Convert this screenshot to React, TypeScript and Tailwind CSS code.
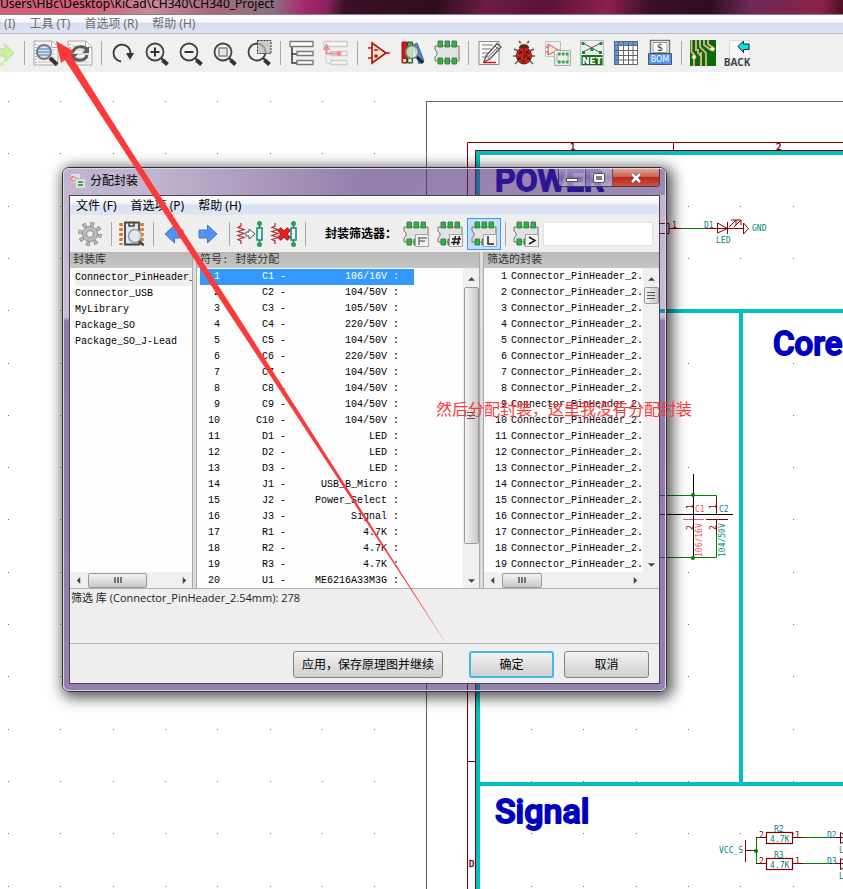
import type { ReactNode } from "react";

const UI = "font-['Noto_Sans','Noto_Sans_CJK_SC',sans-serif]";
const MONO = "font-['Liberation_Mono','Noto_Sans_CJK_SC',monospace]";

/* ---------- data ---------- */

const libraries = ["Connector_PinHeader_", "Connector_USB", "MyLibrary", "Package_SO", "Package_SO_J-Lead"];

const symbols: [string, string][] = [
  ["C1", "106/16V"], ["C2", "104/50V"], ["C3", "105/50V"], ["C4", "220/50V"], ["C5", "104/50V"],
  ["C6", "220/50V"], ["C7", "104/50V"], ["C8", "104/50V"], ["C9", "104/50V"], ["C10", "104/50V"],
  ["D1", "LED"], ["D2", "LED"], ["D3", "LED"], ["J1", "USB_B_Micro"], ["J2", "Power_Select"],
  ["J3", "Signal"], ["R1", "4.7K"], ["R2", "4.7K"], ["R3", "4.7K"], ["U1", "ME6216A33M3G"],
];

const footprints = Array.from({ length: 19 }, () => "Connector_PinHeader_2.");

/* ---------- icons ---------- */

function Svg({ children }: { children: ReactNode }) {
  return (
    <svg viewBox="0 0 26 26" className="h-[26px] w-[26px] overflow-visible" fill="none" aria-hidden="true">
      {children}
    </svg>
  );
}

const Sheet = () => (
  <>
    <path d="M1 1h18l6 6v18H1z" fill="#f4f4f4" stroke="#aaa" />
    <path d="M18.500 1v6.500h6.500" fill="#fff" stroke="#aaa" />
    <path d="M5 6h12M5 10h17M5 14h17M5 18h17M5 22h17" stroke="#c4c4c4" />
    <path d="M3 4v20" stroke="#777" strokeDasharray="1 2" />
  </>
);

const Lens = ({ children }: { children?: ReactNode }) => (
  <Svg>
    <circle cx="11" cy="12" r="8.500" stroke="#444" strokeWidth="1.800" />
    {children}
    <path d="M17 18l2 2" stroke="#333" strokeWidth="2" />
    <path d="M18.500 20l5 4.500" stroke="#333" strokeWidth="4" />
  </Svg>
);

const Chip = ({ children }: { children?: ReactNode }) => (
  <Svg>
    <path d="M1 6h24v15H1v-4l2-2v-3l-2-2z" fill="#e2e2e2" stroke="#777" />
    <path d="M4 1h4.500v6H4zM11 1h4.500v6H11zM18 1h4.500v6H18zM4 18h4.500v6H4zM11 18h4.500v6H11zM18 18h4.500v6H18z" fill="#19c12c" stroke="#55705a" />
    {children}
  </Svg>
);

const ChipTag = ({ d, tone = "#222" }: { d: string; tone?: string }) => (
  <Chip>
    <rect x="12.500" y="13.500" width="13" height="12" fill="#f2f2f2" stroke="#a5a5a5" />
    <path d={d} stroke={tone} strokeWidth="1.500" />
  </Chip>
);

const GreenArrow = () => (
  <Svg>
    <path d="M3 9h12V4l9 9-9 9v-6H3z" fill="#c9f2a4" stroke="#b3dc92" />
    <path d="M12 22v4" stroke="#c9f2a4" strokeWidth="4" />
  </Svg>
);

const FindIcon = () => (
  <Svg>
    <Sheet />
    <circle cx="11" cy="12" r="7" fill="#d5e2f6" fillOpacity=".85" stroke="#777" strokeWidth="2" />
    <path d="M6 9h10M5 12h12M6 15h10" stroke="#7597cf" strokeWidth="1.500" />
    <path d="M17 18l7 6.500" stroke="#333" strokeWidth="4" />
  </Svg>
);

const ReplaceIcon = () => (
  <Svg>
    <Sheet />
    <path d="M6 12c1-6 11-7 14-2M20 15c-1 6-11 7-14 2" stroke="#5c5c5c" strokeWidth="3" />
    <path d="M22 6v7h-7zM4 21v-7h7z" fill="#5c5c5c" />
  </Svg>
);

const RedrawIcon = () => (
  <Svg>
    <path d="M11 21.500A8.500 8.500 0 1 1 20.500 13" stroke="#333" strokeWidth="1.800" />
    <path d="M16 13h8l-4 7z" fill="#333" />
  </Svg>
);

const TreeIcon = () => (
  <Svg>
    <path d="M3 7v16h5M3 14h5" stroke="#333" strokeWidth="1.500" />
    <path d="M1 1.500h23v5H1zM8 11.500h16v4H8zM8 20.500h16v4H8z" fill="#fff" stroke="#777" strokeWidth="1.300" />
  </Svg>
);

const LeaveIcon = () => (
  <Svg>
    <path d="M3 7v16h5" stroke="#ccc" />
    <path d="M1 1.500h23v5H1zM8 11.500h16v4H8zM8 20.500h16v4H8z" fill="#f8f8f8" stroke="#ccc" strokeWidth="1.300" />
    <path d="M3.500 9v4.500h12" stroke="#f08f8f" strokeWidth="2" />
    <path d="M0 10l3.500-7L7 10z" fill="#f08f8f" />
    <circle cx="16" cy="13.500" r="2.500" fill="#f08f8f" />
  </Svg>
);

const OpampIcon = () => (
  <Svg>
    <path d="M6 3l14 10L6 23z" fill="#f6e6cc" stroke="#b01c14" strokeWidth="1.700" />
    <path d="M2 8h4M2 18h4M20 13h4M8 10h4M8 16h4M10 14v4" stroke="#b01c14" strokeWidth="1.400" />
  </Svg>
);

const LibraryIcon = () => (
  <Svg>
    <path d="M2 2h5v21H2z" fill="#d81111" stroke="#921" />
    <path d="M7.500 2h5v21h-5z" fill="#42aa3a" stroke="#185b16" />
    <path d="M13 5l4-2 7 18-5 3z" fill="#4d86df" stroke="#3266a8" />
    <path d="M3 19h3v3H3zM8.500 19h3v3h-3z" fill="#eee" />
    <circle cx="12" cy="12" r="6.500" fill="#d9edda" fillOpacity=".8" stroke="#777" strokeWidth="1.500" />
    <path d="M17 17l6 6" stroke="#222" strokeWidth="3" />
  </Svg>
);

const EditSheetIcon = () => (
  <Svg>
    <path d="M2 1.500h20v23H2z" fill="#fafafa" stroke="#888" />
    <path d="M5 5h11M5 9h9M5 13h7M5 17h3" stroke="#777" />
    <path d="M20 3.500l4 3.500-11 12-6 3 2-6z" fill="#eee" stroke="#555" strokeWidth="1.300" />
    <path d="M9 16l4 3M18 6l4 3.500M11.500 17L21 7" stroke="#666" />
    <path d="M6 22.500h13" stroke="#f00" strokeWidth="1.500" />
  </Svg>
);

const BugIcon = () => (
  <Svg>
    <path d="M8 1l3 4M18 1l-3 4M3 9l4 2M23 9l-4 2M2 16h4M24 16h-4M4 24l4-4M22 24l-4-4" stroke="#555" strokeWidth="1.400" />
    <path d="M8 8c0-5 10-5 10 0z" fill="#333" />
    <path d="M9 4h2M15 4h2" stroke="#f0d040" strokeWidth="2" />
    <ellipse cx="13" cy="15.500" rx="7.500" ry="8.500" fill="#d3221d" stroke="#7d1512" />
    <path d="M13 7v17" stroke="#6b100e" />
    <path d="M8 11h3v3H8zM15 11h3v3h-3zM7 17h3v3H7zM16 17h3v3h-3zM11 20h1v2h-1zM14 15h2v2h-2z" fill="#421" />
  </Svg>
);

const AssignIcon = () => (
  <Svg>
    <path d="M.500 1.500h15v15H.500z" fill="#f0f0f0" stroke="#c0c0c0" />
    <path d="M3 4l10 6-10 5zM1 7h3M1 12h3M13 10h3" fill="#f6e6cc" stroke="#cf5a50" />
    <path d="M9.500 10.500h16v15h-16z" fill="#eee" stroke="#aaa" />
    <path d="M12 14h11v8H12z" stroke="#aaa" />
    <path d="M13 12.500h2.500v3H13zM17 12.500h2.500v3H17zM21 12.500h2.500v3H21zM13 20.500h2.500v3H13zM17 20.500h2.500v3H17zM21 20.500h2.500v3H21z" fill="#3aa845" />
  </Svg>
);

const NetIcon = () => (
  <Svg>
    <path d="M1.500.500h23v25h-23z" fill="#eee" stroke="#bbb" />
    <path d="M4 3l18 10M22 3L4 12" stroke="#555" />
    <path d="M2.500 2h3v3h-3zM20.500 2h3v3h-3zM11.500 8h3v3h-3zM3 11h3v3H3zM20 11h3v3h-3z" fill="#1b8a2b" />
    <path d="M2.500 15h21v10h-21z" fill="#16701c" />
    <text x="13" y="24" textAnchor="middle" className="fill-white font-['DejaVu_Sans',sans-serif] text-[9px] font-bold">NET</text>
  </Svg>
);

const GridIcon = () => (
  <Svg>
    <path d="M1.500 1.500h23v23h-23z" fill="#fff" />
    <path d="M1 1h24v4H1zM1 1h4v24H1z" fill="#5596f5" />
    <path d="M1.500 1.500h23v23h-23zM5.500 1v24M10.500 1v24M15.500 1v24M20 1v24M1 5.500h24M1 10.500h24M1 15.500h24M1 20h24" stroke="#666" />
  </Svg>
);

const BomIcon = () => (
  <Svg>
    <path d="M3.500.500h19v13h-19z" fill="#fff" stroke="#777" strokeWidth="1.500" />
    <path d="M6 2.500h14v10H6z" stroke="#999" />
    <text x="13" y="11" textAnchor="middle" className="fill-[#444] font-['DejaVu_Sans',sans-serif] text-[10px]">$</text>
    <path d="M1.500 13.500h23v11h-23z" fill="#4e92f3" stroke="#555" />
    <text x="13" y="22" textAnchor="middle" className="fill-white font-['DejaVu_Sans',sans-serif] text-[8px]">BOM</text>
  </Svg>
);

const PcbIcon = () => (
  <Svg>
    <path d="M0 0h26v26H0z" fill="#0b6b0b" />
    <path d="M1.500 0v12l3 3M6 0v11M10 0v7l6 6v13M14 0v5l7 5M4 18v8M11 12v14M8 9v4l3 3M18 0v4l5 4" stroke="#dcb88c" strokeWidth="1.800" />
    <circle cx="4" cy="17" r="2" fill="#fff" stroke="#dcb88c" />
    <circle cx="22.500" cy="9" r="2" fill="#fff" stroke="#dcb88c" />
  </Svg>
);

const BackIcon = () => (
  <Svg>
    <path d="M5.500.500h20v18h-20z" fill="#f8f8f8" stroke="#ddd" />
    <path d="M14 6.500L19.500 1v3H25v5.500h-5.500v3z" fill="#00e4e8" stroke="#222" />
    <text x="13" y="26" textAnchor="middle" className="fill-[#444] font-['Open_Sans',sans-serif] text-[10px] font-bold">BACK</text>
  </Svg>
);

const GearIcon = () => (
  <Svg>
    <circle cx="13" cy="13" r="10" stroke="#8a8a8a" strokeWidth="4" strokeDasharray="3.900 3.950" />
    <circle cx="13" cy="13" r="10" stroke="#bdbdbd" strokeWidth="2.500" strokeDasharray="2.500 5.350" strokeDashoffset="-.7" />
    <circle cx="13" cy="13" r="7.500" fill="#bdbdbd" stroke="#8f8f8f" />
    <circle cx="13" cy="13" r="3.500" fill="#f0f0f0" stroke="#8a8a8a" />
  </Svg>
);

const ChipFindIcon = () => (
  <Svg>
    <path d="M2 2v22M23 2v22" stroke="#e07522" strokeWidth="3.500" strokeDasharray="3 2" />
    <path d="M6 1.500h14v22H6z" fill="#e8e8e8" stroke="#444" strokeWidth="1.800" />
    <path d="M10 1v4h5V1" stroke="#444" strokeWidth="1.500" />
    <circle cx="16" cy="15" r="6.500" fill="#e0e9f5" fillOpacity=".9" stroke="#999" strokeWidth="1.500" />
    <path d="M20.500 20l4 4.500" stroke="#444" strokeWidth="2.500" />
  </Svg>
);

const LeftIcon = () => (
  <Svg>
    <path d="M4 13l9.500-9v5H22v8h-8.500v5z" fill="#4f94f5" stroke="#4a78b9" />
  </Svg>
);

const RightIcon = () => (
  <Svg>
    <path d="M22 13l-9.500-9v5H4v8h8.500v5z" fill="#4f94f5" stroke="#4a78b9" />
  </Svg>
);

const Link = ({ children }: { children: ReactNode }) => (
  <Svg>
    <path d="M4 2v3L1 6.500l6 2-6 2 6 2-6 2 6 2-6 2 3 1.500v3" stroke="#b03434" strokeWidth="1.300" />
    <path d="M22.500 1v24" stroke="#187d3c" strokeWidth="1.500" />
    <path d="M20 7h5v12h-5z" fill="#eef5f5" stroke="#108484" strokeWidth="1.500" />
    <circle cx="22.500" cy="2.500" r="2.500" fill="#26a14d" />
    <circle cx="22.500" cy="23.500" r="2.500" fill="#26a14d" />
    {children}
  </Svg>
);

/* ---------- shared controls ---------- */

function ToolButton({ label, active, children }: { label: string; active?: boolean; children: ReactNode }) {
  return (
    <button
      aria-label={label}
      className={`flex h-8 w-[34px] shrink-0 items-center justify-center ${active ? "border border-[#3c9be8] bg-[#bfe0fa]" : ""}`}
    >
      {children}
    </button>
  );
}

const Sep = ({ tight }: { tight?: boolean }) => (
  <div className={`flex shrink-0 justify-center ${tight ? "w-2" : "w-[9px]"}`}>
    <div className="h-6 w-px bg-[#a8a8a8]" />
  </div>
);

function Tri({ dir }: { dir: "up" | "down" | "left" | "right" }) {
  const d = { up: "M0 5.500L4 1.500L8 5.500z", down: "M0 2.500L4 6.500L8 2.500z", left: "M6 0L2 4L6 8z", right: "M2 0L6 4L2 8z" }[dir];
  return (
    <button aria-label={dir} className="flex h-4 w-4 shrink-0 items-center justify-center">
      <svg viewBox="0 0 8 8" className="h-[7px] w-[7px]" aria-hidden="true"><path d={d} fill="#444" /></svg>
    </button>
  );
}

function HScroll({ thumb }: { thumb: string }) {
  return (
    <div className="flex h-4 items-center bg-[#f0f0f0]">
      <Tri dir="left" />
      <div className="flex flex-1 px-0.5">
        <div className={`${thumb} flex h-[15px] items-center justify-center gap-px rounded-[2px] border border-[#999] bg-linear-to-b from-[#f4f4f4] to-[#c9c9c9]`}>
          <i className="h-1.5 w-0.5 bg-[#777]" /><i className="h-1.5 w-0.5 bg-[#777]" /><i className="h-1.5 w-0.5 bg-[#777]" />
        </div>
      </div>
      <Tri dir="right" />
    </div>
  );
}

function VScroll({ thumb }: { thumb: string }) {
  return (
    <div className="flex w-4 shrink-0 flex-col items-center bg-[#f0f0f0]">
      <div className="pt-[3px]"><Tri dir="up" /></div>
      <div className="flex w-full flex-1 flex-col items-center">
        <div className={`${thumb} flex w-[15px] flex-col items-center justify-center gap-0.5 rounded-[2px] border border-[#999] bg-linear-to-r from-[#f4f4f4] to-[#c9c9c9]`}>
          <i className="h-px w-2 bg-[#555]" /><i className="h-px w-2 bg-[#555]" /><i className="h-px w-2 bg-[#555]" />
        </div>
      </div>
      <Tri dir="down" />
    </div>
  );
}

const PaneHeader = ({ children }: { children: ReactNode }) => (
  <h2 className={`h-4 shrink-0 bg-linear-to-b from-[#b9b9b9] to-[#c6c6c6] px-[3px] text-[11px] leading-4 text-[#333] ${MONO}`}>{children}</h2>
);

const Splitter = () => <div className="w-[5px] shrink-0 border-x border-[#a9a9a9] bg-[#dcdcdc]" />;

/* ---------- schematic ---------- */

function Resistor({ y, name, led }: { y: number; name: string; led: string }) {
  return (
    <g>
      <path d={`M756 ${y}h10M793 ${y}h10M829 ${y}h14`} className="stroke-[#840000]" />
      <path d={`M803 ${y}h26`} className="stroke-[#008400]" />
      <rect x="766.500" y={y - 5} width="26" height="11" className="stroke-[#840000]" strokeWidth="1.200" />
      <path d={`M840.500 ${y - 5}v11l10 -5.500l-10 -5.500`} className="stroke-[#840000]" />
      <g className="fill-[#008484] stroke-none">
        <text x="774" y={y - 6}>{name}</text>
        <text x="770" y={y + 4}>4.7K</text>
        <text x="827" y={y}>{led}</text>
        <text x="839" y={y + 15}>LED</text>
      </g>
      <g className="fill-[#840000] stroke-none">
        <text x="759" y={y}>2</text>
        <text x="795" y={y}>1</text>
      </g>
    </g>
  );
}

function Schematic() {
  const steps = Array.from({ length: 40 }, (_, i) => i);
  return (
    <svg className="absolute inset-0 h-full w-full font-['DejaVu_Sans_Mono',monospace] text-[8px]" fill="none" role="img" aria-label="schematic sheet">
      <g transform="translate(0 -72)">
        {steps.map((r) => steps.map((c) => (
          <rect key={`${r}-${c}`} x={Math.round(8 + c * 52.3)} y={Math.round(101 + r * 52.3)} width="1" height="1" className="fill-[#707070]" />
        )))}
        <path d="M426.500 1600V101.500H2400" className="stroke-[#666]" />
        <path d="M467.500 1600V142.500H2400M475.500 1600V150.500H2400M673.500 142v8M467 761.500h8" className="stroke-[#840000]" />
        <path d="M478 1600V153H2400M480 311H2400M741 311V784M480 784H2400" className="stroke-[#00c0c0]" strokeWidth="4" />
        <g className="fill-[#840000] stroke-[#840000] text-[9px]" strokeWidth=".4">
          <text x="570" y="150">1</text>
          <text x="776" y="150">2</text>
          <text x="469" y="867">D</text>
        </g>
        <g className="fill-[#0000c0] stroke-[#0000c0] font-['Roboto',sans-serif] font-medium" strokeWidth="1.800" strokeLinejoin="round">
          <text x="495" y="191" className="text-[32px]">POWER</text>
          <text x="773" y="355" className="text-[33px]">Core</text>
          <text x="495" y="823" className="text-[34px]">Signal</text>
        </g>

        <path d="M645 223.500h24v10h-24M669 228.500h12M703 228.500h40" className="stroke-[#840000]" />
        <path d="M681 228.500h25" className="stroke-[#008400]" />
        <path d="M717.500 223v10l10-4.500zM727.500 222v12M743.500 223v11l5-5.500zM729 227l7-7m-5 0h5v5M734 227l7-7m-5 0h5v5" className="stroke-[#840000]" />
        <text x="672" y="228" className="fill-[#840000]">1</text>
        <g className="fill-[#008484]">
          <text x="704" y="228">D1</text>
          <text x="716" y="243">LED</text>
          <text x="752" y="231">GND</text>
        </g>

        <path d="M640 495.500h76.500v4M640 557.500h76.500V533" className="stroke-[#008400]" />
        <path d="M716.500 498v16M716.500 520v14M706 519.500h22" className="stroke-[#840000]" />
        <path d="M683 519.500h21" className="stroke-[#f55]" />
        <path d="M640 514.500h93M693.500 474v84" className="stroke-black" />
        <circle cx="693" cy="495" r="2" className="fill-[#008400]" />
        <circle cx="693" cy="558" r="2" className="fill-[#008400]" />
        <text x="695" y="512" className="fill-[#ff4a4a]">C1</text>
        <text x="719" y="512" className="fill-[#008484]">C2</text>
        <text transform="translate(702 557) rotate(-90)" className="fill-[#ff4a4a]">106/16V</text>
        <text transform="translate(725 557) rotate(-90)" className="fill-[#008484]">104/50V</text>
        <g className="fill-[#840000]">
          <text transform="translate(693 509) rotate(-90)">1</text>
          <text transform="translate(716 509) rotate(-90)">1</text>
          <text transform="translate(693 530) rotate(-90)">2</text>
          <text transform="translate(716 530) rotate(-90)">2</text>
        </g>

        <text x="719" y="853" className="fill-[#008484]">VCC_S</text>
        <path d="M745.500 840v22M745 850.500h11" className="stroke-[#840000]" />
        <path d="M756.500 837v26" className="stroke-[#008400]" />
        <circle cx="756" cy="851" r="2" className="fill-[#008400]" />
        <Resistor y={837.5} name="R2" led="D2" />
        <Resistor y={863.5} name="R3" led="D3" />
      </g>
    </svg>
  );
}

/* ---------- dialog ---------- */

function AssignDialog() {
  return (
    <section
      aria-label="分配封装"
      className="absolute top-[167px] left-[62px] flex h-[525px] w-[605px] flex-col overflow-hidden rounded-[7px] border border-[#33303a] shadow-[3px_3px_14px_3px_rgba(0,0,0,0.65)]"
    >
      <div className="relative flex min-h-0 flex-1 flex-col rounded-[6px] border border-[#ddd3e6] bg-[linear-gradient(180deg,rgba(76,38,115,.35)_0,rgba(76,38,115,.3)_148px,rgba(76,38,115,.62)_152px,rgba(76,38,115,.58)_100%)] px-[5px] pb-[6px]">
        <header className="-mx-[5px] flex h-[26px] shrink-0 items-start bg-[linear-gradient(100deg,rgba(76,38,115,0)_15%,rgba(76,38,115,.38)_50%,rgba(76,38,115,.3)_100%)] pl-1.5">
          <svg viewBox="0 0 16 16" className="mt-1 mr-1 h-4 w-4" fill="none" aria-hidden="true">
            <path d="M1 1h9v9H1z" fill="#e6dce6" />
            <path d="M2 3l6 3-6 3zM0 6h2M8 6h3" stroke="#d66a66" />
            <path d="M6 6h9v9H6z" fill="#e8ece8" stroke="#c5c5c5" />
            <path d="M8 9h5M8 12h5" stroke="#41a453" strokeWidth="2" />
          </svg>
          <h1 className={`mt-0.5 text-[12px] leading-5 text-black ${UI}`}>分配封装</h1>
          <div className="mr-[5px] ml-auto flex h-[18px] overflow-hidden rounded-b-[4px] border border-t-0 border-[#463a55]">
            <button aria-label="minimize" className="flex w-[27px] items-end justify-center border-r border-[#5d4d70] bg-linear-to-b from-[#ccbedb]/70 via-[#a08db5]/70 to-[#c3b5d3]/70 pb-1">
              <span className="h-[4px] w-3 border border-[#555] bg-white" />
            </button>
            <button aria-label="maximize" className="flex w-[27px] items-center justify-center border-r border-[#5d4d70] bg-linear-to-b from-[#ccbedb]/70 via-[#a08db5]/70 to-[#c3b5d3]/70">
              <span className="h-2 w-2.5 rounded-[1px] border-2 border-white bg-[#887a99] outline outline-[#555]" />
            </button>
            <button aria-label="close" className="flex w-[46px] items-center justify-center bg-[linear-gradient(180deg,#e0a093_0%,#cf6151_45%,#b52b1b_50%,#cd5040_100%)]">
              <svg viewBox="0 0 12 10" className="h-2.5 w-3" aria-hidden="true">
                <path d="M2 1l8 8M10 1L2 9" stroke="#4c4c55" strokeWidth="4" />
                <path d="M2 1l8 8M10 1L2 9" stroke="#fff" strokeWidth="2.500" />
              </svg>
            </button>
          </div>
        </header>

        <div className={`flex min-h-0 flex-1 flex-col border border-[#4b4257] ${UI}`}>
          <nav className="flex h-[19px] shrink-0 items-center gap-[14px] bg-[linear-gradient(180deg,#fff_0,#f0f4fa_40%,#dae1f1_50%,#e0e6f4_100%)] px-1.5 text-[12px] text-black">
            <button>文件 (F)</button>
            <button>首选项 (P)</button>
            <button>帮助 (H)</button>
          </nav>

          <div className="flex h-[37px] shrink-0 items-center bg-[#f0f0f0]/99 pl-[3px]">
            <ToolButton label="库管理"><GearIcon /></ToolButton>
            <Sep tight />
            <ToolButton label="查看封装"><ChipFindIcon /></ToolButton>
            <Sep tight />
            <ToolButton label="上一个"><LeftIcon /></ToolButton>
            <ToolButton label="下一个"><RightIcon /></ToolButton>
            <Sep tight />
            <ToolButton label="自动关联">
              <Link><path d="M9 11h3V8l6 5-6 5v-3H9z" fill="#fff" stroke="#555" /></Link>
            </ToolButton>
            <ToolButton label="删除关联">
              <Link><path d="M8 8l10 10M18 8L8 18" stroke="#8c1010" strokeWidth="5" /><path d="M8 8l10 10M18 8L8 18" stroke="#e82020" strokeWidth="3.500" /></Link>
            </ToolButton>
            <Sep tight />
            <label htmlFor="filter" className="ml-4 w-[74px] shrink-0 text-[12px] font-bold whitespace-nowrap text-black">封装筛选器：</label>
            <ToolButton label="关键字"><ChipTag d="M16 17h8M16 20h6M16 16v8" tone="#777" /></ToolButton>
            <ToolButton label="引脚数"><ChipTag d="M18.500 15l-2 9M22.500 15l-2 9M15 18h9M14 21.500h9" /></ToolButton>
            <ToolButton label="库" active><ChipTag d="M17 15v8h6" /></ToolButton>
            <Sep tight />
            <ToolButton label="文本"><ChipTag d="M16 16l6 3.500-6 3.500" /></ToolButton>
            <input id="filter" className="mr-[6px] h-6 min-w-0 flex-1 border border-[#e2e2e2] bg-white px-1 text-[12px] outline-none" />
          </div>

          <div className={`flex h-[337px] shrink-0 border-b border-[#b0b0b0] text-[10px] text-black ${MONO}`}>
            <div className="flex w-[122px] shrink-0 flex-col">
              <PaneHeader>封装库</PaneHeader>
              <ul className="flex-1 overflow-hidden bg-white/99 pt-0.5 pl-[5px]">
                {libraries.map((l, i) => (
                  <li key={l} className={`h-4 leading-4 whitespace-nowrap ${i === 0 ? "bg-[#f0f0f0]" : ""}`}>{l}</li>
                ))}
              </ul>
              <HScroll thumb="w-[59px]" />
            </div>
            <Splitter />
            <div className="flex w-[282px] shrink-0 flex-col">
              <PaneHeader>符号: 封装分配</PaneHeader>
              <div className="flex min-h-0 flex-1">
                <ul className="flex flex-1 flex-col bg-white/99 pt-px pl-[3px]">
                  {symbols.map(([ref, value], i) => (
                    <li key={ref} className={`flex min-h-0 w-[214px] flex-1 items-center whitespace-nowrap ${i === 0 ? "bg-[#3399ff] text-white" : ""}`}>
                      <span className="w-5 text-right">{i + 1}</span>
                      <span className="w-[54px] text-right">{ref}</span>
                      <span className="w-3 text-right">-</span>
                      <span className="w-[101px] text-right">{value}</span>
                      <span className="w-3 text-right">:</span>
                    </li>
                  ))}
                </ul>
                <VScroll thumb="h-[257px]" />
              </div>
            </div>
            <Splitter />
            <div className="flex min-w-0 flex-1 flex-col">
              <PaneHeader>筛选的封装</PaneHeader>
              <div className="flex min-h-0 flex-1">
                <ol className="flex min-w-0 flex-1 flex-col bg-white/99 pt-px">
                  {footprints.map((f, i) => (
                    <li key={i} className="flex min-h-0 flex-1 items-center gap-1">
                      <span className="w-[23px] shrink-0 text-right">{i + 1}</span>
                      <span className="whitespace-nowrap">{f}</span>
                    </li>
                  ))}
                </ol>
                <VScroll thumb="h-[17px]" />
              </div>
              <div className="bg-[#f0f0f0] pr-4"><HScroll thumb="w-10" /></div>
            </div>
          </div>

          <div className="flex min-h-0 flex-1 flex-col bg-[#f0f0f0]/99">
            <p className="flex-1 px-px font-['Open_Sans','Noto_Sans_CJK_SC',sans-serif] text-[11px] leading-[17px] text-[#222]">筛选 库 (Connector_PinHeader_2.54mm): 278</p>
            <footer className="flex h-10 justify-end border-t border-[#b5b5b5] pt-[7px] pr-2.5 text-[12px] text-black">
              <button className="h-[27px] w-[150px] rounded-[3px] border border-[#858585] bg-linear-to-b from-[#f2f2f2] to-[#cfcfcf]">应用，保存原理图并继续</button>
              <button className="mr-2.5 ml-[26px] h-[27px] w-[85px] rounded-[3px] border-2 border-[#41b9e2] bg-linear-to-b from-[#f2f2f2] to-[#cfcfcf]">确定</button>
              <button className="h-[27px] w-[85px] rounded-[3px] border border-[#858585] bg-linear-to-b from-[#f2f2f2] to-[#cfcfcf]">取消</button>
            </footer>
          </div>
        </div>
      </div>
    </section>
  );
}

/* ---------- page ---------- */

export default function App() {
  return (
    <div className={`relative flex min-h-screen flex-col overflow-hidden bg-white ${UI}`}>
      <div className="h-[14px] shrink-0 overflow-hidden bg-[linear-gradient(100deg,#cf6078_0,#cf5f78_90px,#c9899a_150px,#a9687c_210px,#8a7080_270px,#a42a70_300px,#8f2260_322px,#3a1026_340px,#2c0e1e_430px,#6d1c46_480px,#5a1238_540px,#8e2050_600px,#3a1026_640px,#2c0e20_700px,#6c2a58_740px,#8a2248_810px,#2a0814_843px)]">
        <p className="text-[12px] leading-[8px] whitespace-nowrap text-black">Users\HBc\Desktop\KiCad\CH340\CH340_Project</p>
      </div>
      <nav className="flex h-5 shrink-0 items-center gap-[14px] overflow-hidden border-t border-b border-t-[#8d8088] border-b-[#b6bbcb] bg-[linear-gradient(180deg,#fff_0,#f3f6fb_40%,#d6ddef_45%,#dfe5f3_100%)] text-[12px] text-[#6d6d6d]">
        <button className="-ml-[11px] whitespace-nowrap">查 (I)</button>
        <button>工具 (T)</button>
        <button>首选项 (R)</button>
        <button>帮助 (H)</button>
      </nav>
      <div className="flex h-[38px] shrink-0 items-center overflow-hidden bg-[#f0f0f0]">
        <div className="-ml-[14px] flex items-center">
          <ToolButton label="重做"><GreenArrow /></ToolButton>
          <Sep />
          <ToolButton label="查找"><FindIcon /></ToolButton>
          <ToolButton label="替换"><ReplaceIcon /></ToolButton>
          <Sep />
          <ToolButton label="刷新"><RedrawIcon /></ToolButton>
          <ToolButton label="放大"><Lens><path d="M6.500 12h9M11 7.500v9" stroke="#333" strokeWidth="2" /></Lens></ToolButton>
          <ToolButton label="缩小"><Lens><path d="M6.500 12h9" stroke="#333" strokeWidth="2" /></Lens></ToolButton>
          <ToolButton label="适合页面"><Lens><path d="M7 8h8v8H7z" fill="#e5e5e5" stroke="#888" strokeWidth="1.500" /></Lens></ToolButton>
          <ToolButton label="选区缩放"><Lens><path d="M11.500.500h13.500v13H11.500z" fill="#bbb" fillOpacity=".7" stroke="#333" strokeDasharray="2 1" /></Lens></ToolButton>
          <Sep />
          <ToolButton label="层次"><TreeIcon /></ToolButton>
          <ToolButton label="离开图纸"><LeaveIcon /></ToolButton>
          <Sep />
          <ToolButton label="符号编辑器"><OpampIcon /></ToolButton>
          <ToolButton label="符号库"><LibraryIcon /></ToolButton>
          <ToolButton label="封装编辑器"><Chip /></ToolButton>
          <Sep />
          <ToolButton label="批注"><EditSheetIcon /></ToolButton>
          <ToolButton label="电气规则检查"><BugIcon /></ToolButton>
          <ToolButton label="分配封装"><AssignIcon /></ToolButton>
          <ToolButton label="网表"><NetIcon /></ToolButton>
          <ToolButton label="字段"><GridIcon /></ToolButton>
          <ToolButton label="物料清单"><BomIcon /></ToolButton>
          <Sep />
          <ToolButton label="PCB"><PcbIcon /></ToolButton>
          <ToolButton label="返回"><BackIcon /></ToolButton>
        </div>
      </div>
      <main className="relative flex-1 overflow-hidden">
        <Schematic />
      </main>

      <AssignDialog />

      <svg className="pointer-events-none absolute inset-0 h-full w-full" aria-hidden="true">
        <path d="M56 41L75 52L71 55L99 100L137 160L234 310L447.500 645.500L227 310L130 160L91 100L65 60L61 63z" fill="#fb3b3b" />
      </svg>
      <p className="pointer-events-none absolute top-[397px] left-[436px] text-[16px] leading-6 whitespace-nowrap text-[#fb3b3b]">然后分配封装，这里我没有分配封装</p>
    </div>
  );
}
